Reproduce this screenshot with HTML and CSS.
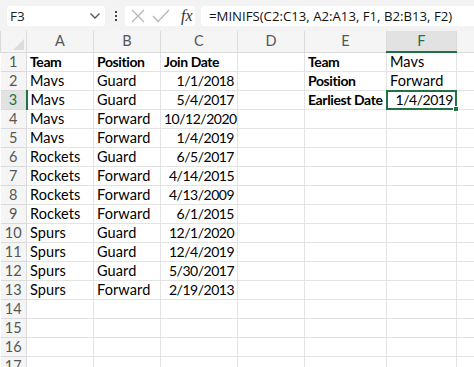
FILE: index.html
```html
<!DOCTYPE html>
<html lang="en">
<head>
  <meta charset="UTF-8">
  <title>MINIFS example</title>
  <link rel="stylesheet" href="styles.css">
</head>
<body>
  <div class="toolbar">
    <div class="namebox">
      <span>F3</span>
      <svg class="chev" width="12" height="8" viewBox="0 0 12 8"><path d="M1.5 1.5 L6 6 L10.5 1.5" fill="none" stroke="#555" stroke-width="1.3"/></svg>
    </div>
    <div class="dots"><i></i><i></i><i></i></div>
    <div class="fxbox">
      <svg width="16" height="16" viewBox="0 0 16 16"><path d="M2 2 L14 14 M14 2 L2 14" stroke="#b5b5b5" stroke-width="1.2" fill="none"/></svg>
      <svg width="18" height="16" viewBox="0 0 18 16"><path d="M1 8 L6 13.5 L17 2" stroke="#b5b5b5" stroke-width="1.2" fill="none"/></svg>
      <span class="fx">fx</span>
    </div>
    <div class="formula">=MINIFS(C2:C13, A2:A13, F1, B2:B13, F2)</div>
  </div>

  <table class="sheet">
    <colgroup>
      <col class="c-row"><col class="c-a"><col class="c-b"><col class="c-c"><col class="c-d"><col class="c-e"><col class="c-f"><col class="c-g">
    </colgroup>
    <thead>
      <tr>
        <th class="corner"><span class="tri"></span></th>
        <th>A</th><th>B</th><th>C</th><th>D</th><th>E</th><th class="sel-col">F</th><th></th>
      </tr>
    </thead>
    <tbody>
      <tr><th>1</th><td class="b">Team</td><td class="b">Position</td><td class="b">Join Date</td><td></td><td class="b">Team</td><td>Mavs</td><td></td></tr>
      <tr><th>2</th><td>Mavs</td><td>Guard</td><td class="num">1/1/2018</td><td></td><td class="b">Position</td><td>Forward</td><td></td></tr>
      <tr><th class="sel-row">3</th><td>Mavs</td><td>Guard</td><td class="num">5/4/2017</td><td></td><td class="b">Earliest Date</td><td class="num active">1/4/2019</td><td></td></tr>
      <tr><th>4</th><td>Mavs</td><td>Forward</td><td class="num">10/12/2020</td><td></td><td></td><td></td><td></td></tr>
      <tr><th>5</th><td>Mavs</td><td>Forward</td><td class="num">1/4/2019</td><td></td><td></td><td></td><td></td></tr>
      <tr><th>6</th><td>Rockets</td><td>Guard</td><td class="num">6/5/2017</td><td></td><td></td><td></td><td></td></tr>
      <tr><th>7</th><td>Rockets</td><td>Forward</td><td class="num">4/14/2015</td><td></td><td></td><td></td><td></td></tr>
      <tr><th>8</th><td>Rockets</td><td>Forward</td><td class="num">4/13/2009</td><td></td><td></td><td></td><td></td></tr>
      <tr><th>9</th><td>Rockets</td><td>Forward</td><td class="num">6/1/2015</td><td></td><td></td><td></td><td></td></tr>
      <tr><th>10</th><td>Spurs</td><td>Guard</td><td class="num">12/1/2020</td><td></td><td></td><td></td><td></td></tr>
      <tr><th>11</th><td>Spurs</td><td>Guard</td><td class="num">12/4/2019</td><td></td><td></td><td></td><td></td></tr>
      <tr><th>12</th><td>Spurs</td><td>Guard</td><td class="num">5/30/2017</td><td></td><td></td><td></td><td></td></tr>
      <tr><th>13</th><td>Spurs</td><td>Forward</td><td class="num">2/19/2013</td><td></td><td></td><td></td><td></td></tr>
      <tr><th>14</th><td></td><td></td><td></td><td></td><td></td><td></td><td></td></tr>
      <tr><th>15</th><td></td><td></td><td></td><td></td><td></td><td></td><td></td></tr>
      <tr><th>16</th><td></td><td></td><td></td><td></td><td></td><td></td><td></td></tr>
      <tr><th>17</th><td></td><td></td><td></td><td></td><td></td><td></td><td></td></tr>
    </tbody>
  </table>
</body>
</html>
```

FILE: styles.css
```css
body {
  margin: 0;
  font-family: Lato, 'Liberation Sans', sans-serif;
  background: #fff;
  overflow: hidden;
}

.toolbar {
  display: flex;
  align-items: center;
  height: 31px;
  padding: 0 0 0 7px;
  background: #f3f3f3;
  box-sizing: border-box;
  font-family: 'Open Sans', sans-serif;
}

.namebox {
  display: flex;
  align-items: center;
  justify-content: space-between;
  width: 98px;
  height: 20px;
  padding: 0 4px 0 3px;
  box-sizing: border-box;
  background: #fff;
  border-radius: 3px;
  font-size: 13.5px;
  color: #222;
}

.dots {
  display: flex;
  flex-direction: column;
  gap: 2px;
  margin: 0 8px 0 10px;
}

.dots i {
  width: 2px;
  height: 2px;
  background: #444;
}

.fxbox {
  display: flex;
  align-items: center;
  gap: 6px;
  width: 70px;
  height: 20px;
  padding: 0 0 0 5px;
  box-sizing: border-box;
  background: #fff;
  border-radius: 3px;
}

.fx {
  margin-left: 5px;
  font-family: 'Liberation Serif', serif;
  font-style: italic;
  font-size: 16px;
  color: #333;
}

.formula {
  flex: 1;
  height: 20px;
  margin-left: 6px;
  padding-left: 8px;
  background: #fff;
  border-radius: 3px 0 0 3px;
  font-size: 13.2px;
  line-height: 20px;
  color: #111;
  white-space: nowrap;
  overflow: hidden;
}

.sheet {
  table-layout: fixed;
  border-collapse: collapse;
  width: 520px;
  font-size: 14.5px;
  color: #000;
}

.c-row { width: 26px; }
.c-a { width: 67px; }
.c-b { width: 67px; }
.c-c { width: 77px; }
.c-d { width: 67px; }
.c-e { width: 82px; }
.c-f { width: 70px; }
.c-g { width: 64px; }

.sheet th,
.sheet td {
  height: 19px;
  padding: 0 3px;
  border: 1px solid #e3e3e3;
  white-space: nowrap;
  overflow: visible;
  line-height: 18px;
  box-sizing: border-box;
  letter-spacing: 0.1px;
}

.sheet thead th {
  height: 21px;
  background: #f5f5f5;
  font-weight: normal;
  color: #555;
  border-color: #dadada;
  border-top: none;
}

.sheet tbody th {
  background: #f5f5f5;
  font-weight: normal;
  color: #555;
  text-align: center;
  padding: 0;
  border-color: #dadada;
  border-left: none;
  letter-spacing: 0;
}

.corner {
  position: relative;
}

.tri {
  position: absolute;
  right: 2px;
  bottom: 2px;
  width: 0;
  height: 0;
  border-left: 11px solid transparent;
  border-bottom: 11px solid #dcdcdc;
}

.sheet thead th.sel-col {
  background: #e2e2e2;
  color: #217346;
  border-bottom: 2px solid #217346;
}

.sheet tbody th.sel-row {
  background: #e2e2e2;
  color: #217346;
  border-right: 2px solid #217346;
}

.sheet td.b {
  font-size: 14px;
  font-weight: bold;
  letter-spacing: -0.4px;
}

.sheet td.num {
  font-size: 14px;
  text-align: right;
  letter-spacing: -0.5px;
}

.active {
  position: relative;
}

.active::after {
  content: "";
  position: absolute;
  left: -1px;
  top: -1px;
  right: -1px;
  bottom: -1px;
  border: 2px solid #217346;
}

.active::before {
  content: "";
  position: absolute;
  right: -3px;
  bottom: -3px;
  width: 4px;
  height: 4px;
  background: #217346;
  border: 1px solid #fff;
  z-index: 1;
}
```
